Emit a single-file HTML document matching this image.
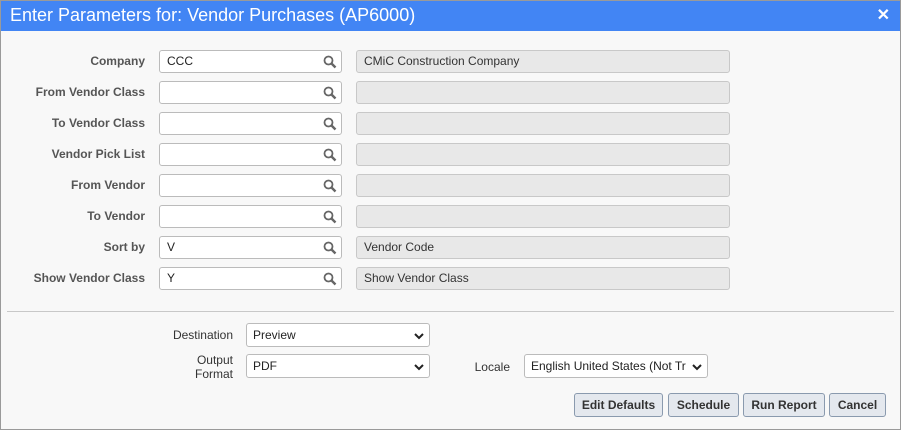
<!DOCTYPE html>
<html><head><style>
*{box-sizing:border-box;margin:0;padding:0}
body{width:901px;height:430px;overflow:hidden;font-family:"Liberation Sans",Arial,sans-serif;background:#fff}
.win{position:absolute;left:0;top:0;width:901px;height:430px;background:#f8f8f8}
.bd{position:absolute;left:0;top:0;width:901px;height:430px;border:1px solid #9a9a9a;pointer-events:none}
.title{position:absolute;left:0;top:0;width:901px;height:31px;background:#4285f4;color:#fff;font-size:18px;line-height:31px;padding-left:10px}
.x{position:absolute;right:11px;top:0;font-size:16px;font-weight:bold}
.lbl{position:absolute;width:140px;left:5px;text-align:right;font-size:12px;font-weight:bold;color:#555;line-height:23px}
.inp{position:absolute;left:159px;width:183px;height:23px;background:#fff;border:1px solid #bbb;border-radius:3px;font-size:12px;line-height:21px;padding-left:7px;color:#222}
.inp svg{position:absolute;right:4px;top:4px}
.ro{position:absolute;left:356px;width:374px;height:23px;background:#e8e8e8;border:1px solid #c8c8c8;border-radius:3px;font-size:12px;line-height:21px;padding-left:7px;color:#333}
.sep{position:absolute;left:7px;top:311px;width:887px;height:1px;background:#c8c8c8}
.l2{position:absolute;font-size:12px;color:#333;text-align:right}
.sel{position:absolute;height:24px;background:#fff;border:1px solid #bbb;border-radius:3px;font-size:12px;line-height:22px;padding-left:6px;color:#222;overflow:hidden;white-space:nowrap}
.sel svg{position:absolute;right:5px;top:8px;background:#fff}
.btn{position:absolute;top:393px;height:24px;background:#e4e8ee;border:1px solid #8a9aae;border-radius:3px;font-size:12px;font-weight:bold;color:#333;text-align:center;line-height:22px}
</style></head><body>
<div class="win">
<div class="title">Enter Parameters for: Vendor Purchases (AP6000)<span class="x">✕</span></div>

<div class="lbl" style="top:50px">Company</div>
<div class="lbl" style="top:81px">From Vendor Class</div>
<div class="lbl" style="top:112px">To Vendor Class</div>
<div class="lbl" style="top:143px">Vendor Pick List</div>
<div class="lbl" style="top:174px">From Vendor</div>
<div class="lbl" style="top:205px">To Vendor</div>
<div class="lbl" style="top:236px">Sort by</div>
<div class="lbl" style="top:267px">Show Vendor Class</div>

<div class="inp" style="top:50px">CCC<svg width="14" height="14"><circle cx="5.5" cy="5.5" r="4" fill="none" stroke="#666" stroke-width="1.8"/><path d="M8.5 8.5L12.5 12.5" stroke="#666" stroke-width="2.4"/></svg></div>
<div class="inp" style="top:81px"><svg width="14" height="14"><circle cx="5.5" cy="5.5" r="4" fill="none" stroke="#666" stroke-width="1.8"/><path d="M8.5 8.5L12.5 12.5" stroke="#666" stroke-width="2.4"/></svg></div>
<div class="inp" style="top:112px"><svg width="14" height="14"><circle cx="5.5" cy="5.5" r="4" fill="none" stroke="#666" stroke-width="1.8"/><path d="M8.5 8.5L12.5 12.5" stroke="#666" stroke-width="2.4"/></svg></div>
<div class="inp" style="top:143px"><svg width="14" height="14"><circle cx="5.5" cy="5.5" r="4" fill="none" stroke="#666" stroke-width="1.8"/><path d="M8.5 8.5L12.5 12.5" stroke="#666" stroke-width="2.4"/></svg></div>
<div class="inp" style="top:174px"><svg width="14" height="14"><circle cx="5.5" cy="5.5" r="4" fill="none" stroke="#666" stroke-width="1.8"/><path d="M8.5 8.5L12.5 12.5" stroke="#666" stroke-width="2.4"/></svg></div>
<div class="inp" style="top:205px"><svg width="14" height="14"><circle cx="5.5" cy="5.5" r="4" fill="none" stroke="#666" stroke-width="1.8"/><path d="M8.5 8.5L12.5 12.5" stroke="#666" stroke-width="2.4"/></svg></div>
<div class="inp" style="top:236px">V<svg width="14" height="14"><circle cx="5.5" cy="5.5" r="4" fill="none" stroke="#666" stroke-width="1.8"/><path d="M8.5 8.5L12.5 12.5" stroke="#666" stroke-width="2.4"/></svg></div>
<div class="inp" style="top:267px">Y<svg width="14" height="14"><circle cx="5.5" cy="5.5" r="4" fill="none" stroke="#666" stroke-width="1.8"/><path d="M8.5 8.5L12.5 12.5" stroke="#666" stroke-width="2.4"/></svg></div>

<div class="ro" style="top:50px">CMiC Construction Company</div>
<div class="ro" style="top:81px"></div>
<div class="ro" style="top:112px"></div>
<div class="ro" style="top:143px"></div>
<div class="ro" style="top:174px"></div>
<div class="ro" style="top:205px"></div>
<div class="ro" style="top:236px">Vendor Code</div>
<div class="ro" style="top:267px">Show Vendor Class</div>

<div class="sep"></div>

<div class="l2" style="left:160px;width:73px;top:328px">Destination</div>
<div class="l2" style="left:160px;width:73px;top:353px;line-height:14px">Output<br>Format</div>
<div class="l2" style="left:460px;width:50px;top:360px">Locale</div>

<div class="sel" style="left:246px;top:323px;width:184px">Preview<svg width="10" height="8"><path d="M1 2L5 6L9 2" fill="none" stroke="#222" stroke-width="2"/></svg></div>
<div class="sel" style="left:246px;top:354px;width:184px">PDF<svg width="10" height="8"><path d="M1 2L5 6L9 2" fill="none" stroke="#222" stroke-width="2"/></svg></div>
<div class="sel" style="left:524px;top:354px;width:184px">English United States (Not Tr<svg width="10" height="8"><path d="M1 2L5 6L9 2" fill="none" stroke="#222" stroke-width="2"/></svg></div>

<div class="btn" style="left:574px;width:89px">Edit Defaults</div>
<div class="btn" style="left:668px;width:71px">Schedule</div>
<div class="btn" style="left:743px;width:82px">Run Report</div>
<div class="btn" style="left:829px;width:57px">Cancel</div>
</div>
<div class="bd"></div>
</body></html>
